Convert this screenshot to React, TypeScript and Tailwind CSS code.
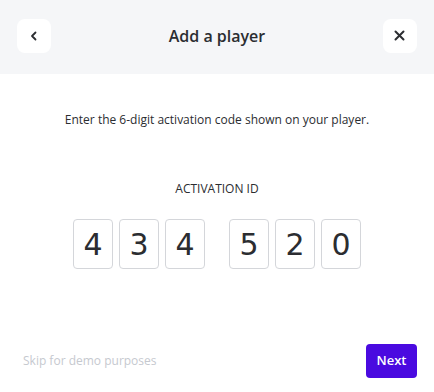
import React from "react";

export default function App() {
  const font = { fontFamily: '"Open Sans", "Noto Sans", sans-serif' };
  const digits1 = ["4", "3", "4"];
  const digits2 = ["5", "2", "0"];
  const Box = ({ d }: { d: string }) => (
    <div
      className="w-[40px] h-[50px] border border-[#d4d6da] rounded-[4px] flex items-center justify-center text-[30px] text-[#2b2d31] bg-white"
      style={{ fontFamily: '"DejaVu Sans", sans-serif' }}
    >
      {d}
    </div>
  );
  return (
    <div className="w-[434px] h-[392px] bg-white flex flex-col" style={font}>
      <div className="h-[74px] bg-[#f5f6f8] flex items-center justify-between px-[17px] pb-[3px]">
        <button className="w-[34px] h-[34px] bg-white rounded-[8px] flex items-center justify-center">
          <svg width="10" height="10" viewBox="0 0 10 10" fill="none">
            <path d="M6.5 1.5 L3 5 L6.5 8.5" stroke="#2b2d31" strokeWidth="1.8" strokeLinecap="round" strokeLinejoin="round" />
          </svg>
        </button>
        <div className="text-[16px] font-semibold text-[#2b2d31] pt-[1px]">Add a player</div>
        <button className="w-[34px] h-[34px] bg-white rounded-[8px] flex items-center justify-center">
          <svg width="11" height="11" viewBox="0 0 11 11" fill="none">
            <path d="M1.5 1.5 L9.5 9.5 M9.5 1.5 L1.5 9.5" stroke="#2b2d31" strokeWidth="2" strokeLinecap="round" />
          </svg>
        </button>
      </div>
      <div className="mt-[37px] text-center text-[12px] leading-[18px] text-[#2b2d31]">
        Enter the 6-digit activation code shown on your player.
      </div>
      <div className="mt-[51px] text-center text-[12px] leading-[18px] text-[#2b2d31]">ACTIVATION ID</div>
      <div className="mt-[21px] flex justify-center gap-[24px]">
        <div className="flex gap-[6px]">
          {digits1.map((d, i) => (
            <Box key={i} d={d} />
          ))}
        </div>
        <div className="flex gap-[6px]">
          {digits2.map((d, i) => (
            <Box key={i} d={d} />
          ))}
        </div>
      </div>
      <div className="flex-1" />
      <div className="flex items-center justify-between pl-[23px] pr-[17px] pb-[14px]">
        <span className="text-[12px] text-[#c6c9cf]">Skip for demo purposes</span>
        <button className="w-[51px] h-[34px] rounded-[4px] bg-[#4a0ae0] text-white text-[13px] font-semibold">
          Next
        </button>
      </div>
    </div>
  );
}
